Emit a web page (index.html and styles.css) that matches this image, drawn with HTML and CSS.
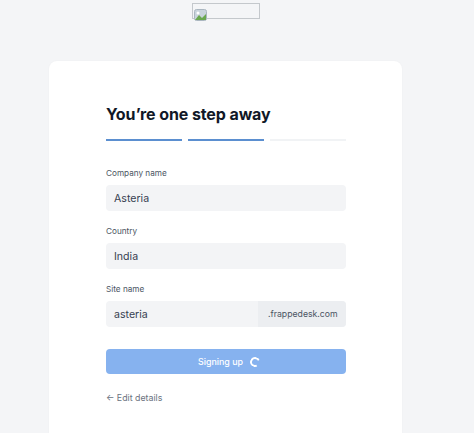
FILE: index.html
```html
<!DOCTYPE html>
<html lang="en">
<head>
  <meta charset="UTF-8" />
  <meta name="viewport" content="width=device-width, initial-scale=1.0"/>
  <title>Sign up</title>
  <link rel="stylesheet" href="styles.css">
</head>
<body>
  <div class="page">
    <div class="logo-wrap">
      <div class="logo">
        <svg width="13" height="12" viewBox="0 0 13 12">
          <rect x="0.5" y="0.5" width="12" height="11" rx="2" fill="#c9d4dc" stroke="#aab6c0"/>
          <path d="M1 11 L5 6 L8 9 L12 5 L12 11 Z" fill="#6aa84f"/>
          <circle cx="4" cy="4" r="1.5" fill="#fff"/>
        </svg>
      </div>
    </div>

    <div class="card">
      <h2>You’re one step away</h2>

      <div class="steps">
        <span class="step done"></span>
        <span class="step done"></span>
        <span class="step"></span>
      </div>

      <label>Company name</label>
      <div class="input">Asteria</div>

      <label>Country</label>
      <div class="input">India</div>

      <label>Site name</label>
      <div class="input site">
        <span class="site-value">asteria</span>
        <span class="suffix">.frappedesk.com</span>
      </div>

      <button class="submit" disabled>
        Signing up
        <span class="spinner"></span>
      </button>

      <a class="back" href="#">← Edit details</a>
    </div>
  </div>
</body>
</html>
```

FILE: styles.css
```css
* {
  box-sizing: border-box;
}

body {
  font-family: Inter, 'Noto Sans', sans-serif;
  background: #f4f5f7;
  margin: 0;
  color: #1f272e;
}

.page {
  width: 452px;
}

.logo-wrap {
  display: flex;
  justify-content: center;
  padding-top: 3px;
}

.logo {
  width: 68px;
  height: 16px;
  border: 1px solid #c4c8cc;
  padding: 1px;
}

.card {
  width: 353px;
  margin: 42px 0 0 49px;
  background: white;
  border-radius: 8px;
  padding: 42px 56px 40px 57px;
  min-height: 380px;
  box-shadow: 0 0 2px rgba(0, 0, 0, 0.04);
}

h2 {
  font-size: 16px;
  font-weight: 700;
  letter-spacing: -0.1px;
  margin: 0;
  line-height: 22px;
  color: #111827;
}

.steps {
  display: flex;
  gap: 6px;
  margin-top: 14px;
  margin-bottom: 27px;
}

.step {
  flex: 1;
  height: 2px;
  background: #f1f3f5;
}

.step.done {
  background: #5b8fd0;
}

label {
  display: block;
  font-size: 8.2px;
  color: #4b5563;
  margin-bottom: 7px;
  line-height: 10px;
}

.input {
  height: 26px;
  background: #f3f4f6;
  border-radius: 4px;
  font-size: 10.6px;
  color: #374151;
  padding: 0 8px;
  display: flex;
  align-items: center;
  margin-bottom: 15px;
}

.input.site {
  padding: 0;
  margin-bottom: 22px;
}

.site-value {
  flex: 1;
  padding: 0 8px;
}

.suffix {
  width: 88px;
  height: 100%;
  display: flex;
  align-items: center;
  padding: 0 9px 0 10px;
  background: #eceef1;
  font-size: 8.7px;
  color: #4b5563;
  border-radius: 0 4px 4px 0;
}

.submit {
  width: 100%;
  height: 25px;
  border: none;
  border-radius: 4px;
  background: #86b2ef;
  color: white;
  font-family: inherit;
  font-size: 8.9px;
  font-weight: 500;
  display: flex;
  align-items: center;
  justify-content: center;
  gap: 7px;
  padding: 0 0 0 6px;
}

.spinner {
  width: 10px;
  height: 10px;
  border: 2px solid white;
  border-right-color: transparent;
  border-radius: 50%;
  transform: rotate(20deg);
}

.back {
  display: block;
  margin-top: 18px;
  font-size: 8.8px;
  color: #6b7280;
  text-decoration: none;
}
```
